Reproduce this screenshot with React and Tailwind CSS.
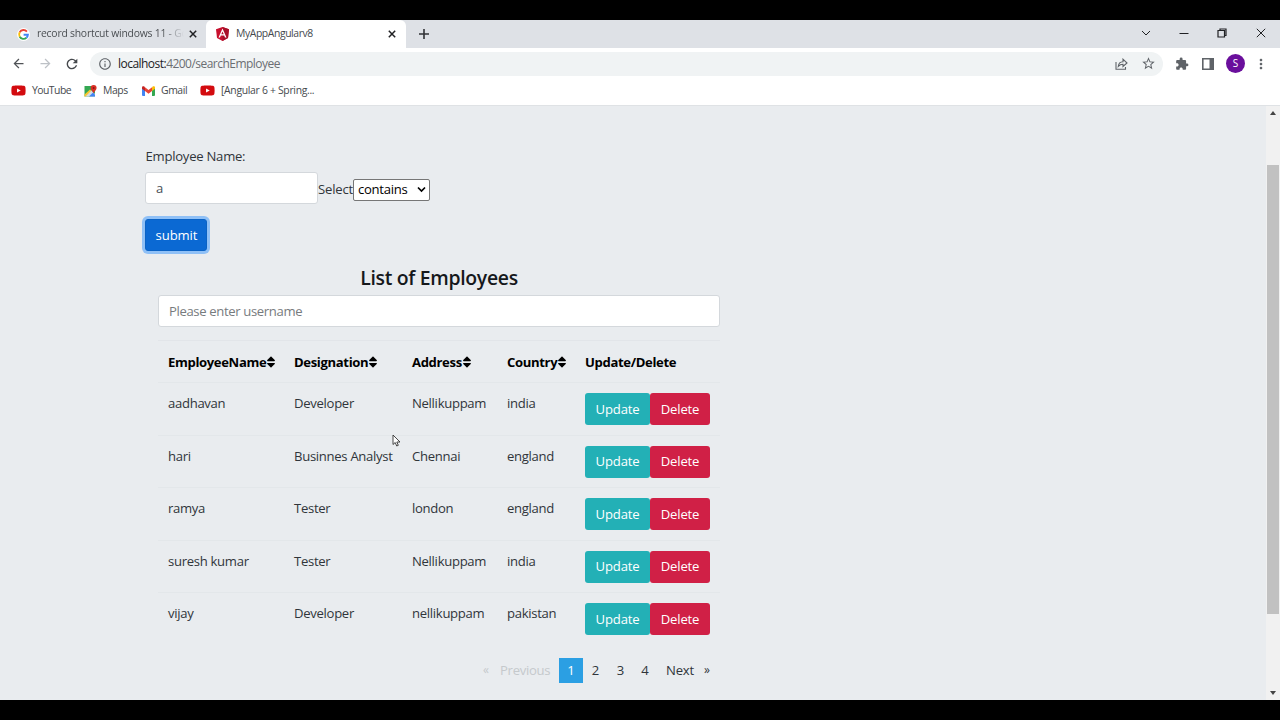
import React, { useState } from "react";
import { FaSort, FaYoutube } from "react-icons/fa";
import { MdExtension, MdStarBorder, MdMoreVert, MdInfoOutline, MdRefresh, MdArrowBack, MdArrowForward } from "react-icons/md";

const employees = [
    { name: "aadhavan", designation: "Developer", address: "Nellikuppam", country: "india" },
    { name: "hari", designation: "Businnes Analyst", address: "Chennai", country: "england" },
    { name: "ramya", designation: "Tester", address: "london", country: "england" },
    { name: "suresh kumar", designation: "Tester", address: "Nellikuppam", country: "india" },
    { name: "vijay", designation: "Developer", address: "nellikuppam", country: "pakistan" },
];

const columns = "grid grid-cols-[126px_118px_95px_78px_1fr] pl-[10px]";

function CloseIcon({ className }) {
    return (
        <svg className={className} width="8" height="8" viewBox="0 0 8 8" stroke="#202124" strokeWidth="1.5">
            <path d="M0.8 0.8l6.4 6.4M7.2 0.8L0.8 7.2" />
        </svg>
    );
}

function GoogleIcon() {
    return (
        <svg className="shrink-0" width="13" height="13" viewBox="0 0 13 13">
            <circle cx="6.5" cy="6.5" r="6.5" fill="#fff" />
            <g fill="none" strokeWidth="1.9">
                <path d="M9.900 3.600A4.400 4.400 0 0 0 2.700 4.300" stroke="#ea4335" />
                <path d="M2.700 4.300A4.400 4.400 0 0 0 2.700 8.700" stroke="#fbbc05" />
                <path d="M2.700 8.700A4.400 4.400 0 0 0 9.400 9.800" stroke="#34a853" />
                <path d="M9.400 9.800A4.400 4.400 0 0 0 10.900 6.700H6.600" stroke="#4285f4" />
            </g>
        </svg>
    );
}

function AngularIcon() {
    return (
        <svg width="13" height="14" viewBox="0 0 13 14">
            <path d="M6.5 0L13 2.3l-1 8.6L6.5 14 1 10.9 0 2.3z" fill="#c8102e" />
            <path d="M6.5 0L13 2.3l-1 8.6L6.5 14z" fill="#a81029" />
            <path d="M6.5 1.6L2.5 10.4H4l.8-2h3.4l.8 2h1.5zM6.5 4.4L7.7 7.2H5.3z" fill="#fff" fillRule="evenodd" />
        </svg>
    );
}

function MapsIcon() {
    return (
        <svg width="13" height="12" viewBox="0 0 13 12">
            <path d="M0.5 1h8L11 5v6.5H0.5z" fill="#34a853" />
            <path d="M0.5 11.5L7 5l4 4v2.5z" fill="#d5dbe3" />
            <path d="M0.5 9.5L6 4.5l1.200 1.200-5.700 5.800h-1z" fill="#fbc52d" />
            <path d="M5 11.5L9 7.5l2 2v2z" fill="#4285f4" />
            <path d="M9.6 0a3 3 0 0 1 3 3c0 2-2 2.8-3 5.2-1-2.400-3-3.200-3-5.200a3 3 0 0 1 3-3z" fill="#d93025" />
            <circle cx="9.600" cy="3" r="1" fill="#8b1a12" />
        </svg>
    );
}

function GmailIcon() {
    return (
        <svg width="13" height="10" viewBox="0 0 13 10">
            <path d="M0 1.500L3 3.500V10H1a1 1 0 0 1-1-1z" fill="#4285f4" />
            <path d="M13 1.500L10 3.500V10h2a1 1 0 0 0 1-1z" fill="#34a853" />
            <path d="M3 1.300L6.500 4 10 1.300V5L6.500 7.700 3 5z" fill="#ea4335" />
            <path d="M0 1.500C0 .2 1.400-.2 2.300.6L3 1.300V5L0 2.800z" fill="#c5221f" />
            <path d="M13 1.500C13 .2 11.600-.2 10.700.6L10 1.300V5l3-2.200z" fill="#fbbc04" />
        </svg>
    );
}

function TabStrip() {
    return (
        <div className="flex h-7 bg-[#dee1e6] text-[10.4px] text-[#45494d]">
            <div className="flex w-[206px] items-center pl-[17px]">
                <GoogleIcon />
                <div className="ml-[7px] w-[147px] bg-linear-to-r from-[#45494d] from-85% to-[#dee1e6] bg-clip-text whitespace-nowrap text-transparent tracking-[-0.230px]">
                    record shortcut windows 11 - Go
                </div>
                <CloseIcon className="ml-[5px] shrink-0" />
            </div>
            <div className="flex w-[200px] items-center rounded-t-md bg-white pl-[10px]">
                <AngularIcon />
                <span className="ml-[7px] tracking-[-0.410px]">MyAppAngularv8</span>
                <CloseIcon className="mr-[10px] ml-auto" />
            </div>
            <div className="flex grow items-center pl-[13px]">
                <svg width="10" height="10" viewBox="0 0 10 10" stroke="#303236" strokeWidth="1.600">
                    <path d="M5 0v10M0 5h10" />
                </svg>
                <div className="ml-auto flex items-center pr-[14px] pb-[2px]">
                    <svg width="10" height="10" viewBox="0 0 10 10" fill="none" stroke="#202124">
                        <path d="M1 3l4 4 4-4" />
                    </svg>
                    <svg className="ml-7" width="10" height="10" viewBox="0 0 10 10" stroke="#202124">
                        <path d="M0.500 5.500h9" />
                    </svg>
                    <svg className="ml-7" width="10" height="10" viewBox="0 0 10 10" fill="none" stroke="#202124" strokeWidth="1.200">
                        <path d="M1 2.500h6.500V9H1zM3 2.500V1h6v6.500H7.500" />
                    </svg>
                    <svg className="ml-[29px]" width="10" height="10" viewBox="0 0 10 10" stroke="#202124">
                        <path d="M0.800 0.800l8.400 8.400M9.200 0.800L0.800 9.200" />
                    </svg>
                </div>
            </div>
        </div>
    );
}

function Toolbar() {
    return (
        <div className="flex h-[31px] items-center bg-white pl-[11px] text-[#5f6368]">
            <MdArrowBack size={15} color="#505357" />
            <MdArrowForward size={15} color="#bdc1c6" className="ml-3" />
            <MdRefresh size={16} color="#46494d" className="ml-[11px]" />
            <div className="ml-[10px] flex h-6 w-[1073px] items-center rounded-full bg-[#f0f3f4] pl-2">
                <MdInfoOutline size={14} />
                <span className="ml-[6px] text-[12px] tracking-[-0.530px] text-[#6b6e72]">
                    <span className="text-[#202124]">localhost:</span>4200/searchEmployee
                </span>
                <svg className="ml-auto" width="13" height="12" viewBox="0 0 13 12" fill="none" stroke="#5f6368" strokeWidth="1.100">
                    <path d="M1 4v7.300h9.500V9M3.300 8.300C3.600 5.300 5 3.800 8 3.700V1.200L12 5 8 8.500V6.200C6 6.200 4.600 6.800 3.300 8.300z" />
                </svg>
                <MdStarBorder size={15} className="mr-[7px] ml-[13px]" />
            </div>
            <MdExtension size={14} className="ml-[12px]" />
            <svg className="ml-[13px]" width="12" height="12" viewBox="0 0 12 12">
                <path d="M0.800 0.800h10.400v10.400H0.800z" fill="none" stroke="#5f6368" strokeWidth="1.600" />
                <path d="M7.500 0.800h4v10.400h-4z" fill="#5f6368" />
            </svg>
            <div className="ml-3 flex size-[19px] items-center justify-center rounded-full bg-[#6a0f9c] text-[10px] text-white">S</div>
            <MdMoreVert size={16} className="ml-[8px]" />
        </div>
    );
}

function Bookmarks() {
    return (
        <div className="flex h-[27px] items-center border-b border-[#dfe2e5] bg-white pb-[3px] pl-[11px] text-[10.400px] text-[#45494d]">
            <FaYoutube size={15} color="#d30b0f" />
            <span className="ml-[6px] w-[52px] tracking-[-0.520px]">YouTube</span>
            <MapsIcon />
            <span className="ml-[6px] w-[39px] tracking-[-0.450px]">Maps</span>
            <GmailIcon />
            <span className="ml-[6px] w-[39px] tracking-[-0.400px]">Gmail</span>
            <FaYoutube size={15} color="#d30b0f" />
            <span className="ml-[6px] tracking-[-0.310px]">[Angular 6 + Spring...</span>
        </div>
    );
}

function SearchForm() {
    const [name, setName] = useState("a");
    return (
        <div>
            <p className="h-[19px] pl-[0.500px] leading-[19px] tracking-[-0.250px]">Employee Name:</p>
            <div className="mt-[6px] flex h-8 items-center">
                <input
                    className="h-8 w-[173px] rounded-[3px] border border-[#d4d8dc] bg-white pl-[10px] text-[#495057] outline-none"
                    value={name}
                    onChange={(e) => setName(e.target.value)}
                />
                <span className="pt-[4px] tracking-[-0.200px]">Select</span>
                <button className="mt-[3px] ml-auto flex h-[22px] w-[78px] items-center justify-between rounded-[2px] border border-[#767676] bg-white pr-[3px] pl-[4px] text-black">
                    <span className="tracking-[-0.280px]">contains</span>
                    <svg width="9" height="7" viewBox="0 0 9 7" fill="none" stroke="#000" strokeWidth="1.700">
                        <path d="M1 1.500l3.500 3.500L8 1.500" />
                    </svg>
                </button>
            </div>
            <button className="mt-[15px] h-8 w-[62px] rounded-[3px] border border-[#0a62c4] bg-[#0b69d3] pt-[2px] pl-px text-white tracking-[-0.100px] shadow-[0_0_0_3px_#8fc0f6]">submit</button>
        </div>
    );
}

function Heading({ children, sort = true }) {
    return (
        <div className="flex items-center text-black">
            <span>{children}</span>
            {sort && <FaSort size={14} className="-mx-[2px] mb-[2px]" />}
        </div>
    );
}

function EmployeeTable() {
    return (
        <div className="mt-[13px] border-t border-[#e2e5e9]">
            <div className={`${columns} h-[41px] pt-[2px] font-bold tracking-[-0.360px]`}>
                <Heading>EmployeeName</Heading>
                <Heading>Designation</Heading>
                <Heading>Address</Heading>
                <Heading>Country</Heading>
                <Heading sort={false}>Update/Delete</Heading>
            </div>
            {employees.map((emp) => (
                <div key={emp.name} className={`${columns} h-[52.500px] border-t border-[#e3e7ea] pt-[10px] leading-[21px] tracking-[-0.300px]`}>
                    <span>{emp.name}</span>
                    <span>{emp.designation}</span>
                    <span>{emp.address}</span>
                    <span>{emp.country}</span>
                    <div className="flex h-8 tracking-[-0.150px] text-white">
                        <button className="w-[65px] rounded-[3px] bg-[#23b0b6]">Update</button>
                        <button className="w-[60px] rounded-[3px] bg-[#d02046]">Delete</button>
                    </div>
                </div>
            ))}
        </div>
    );
}

function Pagination() {
    return (
        <div className="mt-[13px] flex h-[25px] items-center">
            <span className="ml-[325px] w-[17px] text-[12px] text-[#c5c9cc]">«</span>
            <span className="w-[59px] pt-px tracking-[-0.300px] text-[#c5c9cc]">Previous</span>
            <button className="h-[25px] w-6 bg-[#2b9fe3] pt-px text-white">1</button>
            <button className="w-[25px] pt-px">2</button>
            <button className="w-[25px] pt-px">3</button>
            <button className="w-[24px] pt-px">4</button>
            <span className="ml-[9px] w-[38px] pt-px tracking-[-0.200px]">Next</span>
            <span className="text-[12px]">»</span>
        </div>
    );
}

function Scrollbar() {
    return (
        <div className="flex w-[14px] flex-col items-center bg-[#f1f1f1] py-[5px]">
            <svg width="6" height="4" viewBox="0 0 6 4"><path d="M0 4l3-4 3 4z" fill="#444" /></svg>
            <div className="mt-[50px] h-[449px] w-3 bg-[#c1c1c1]" />
            <svg className="mt-auto" width="6" height="4" viewBox="0 0 6 4"><path d="M0 0l3 4 3-4z" fill="#444" /></svg>
        </div>
    );
}

export default function App() {
    return (
        <div className="h-[720px] w-[1280px] overflow-hidden bg-black py-5 font-['Open_Sans',sans-serif]">
            <TabStrip />
            <Toolbar />
            <Bookmarks />
            <div className="relative flex h-[594px] bg-[#e9ecef] text-[13.100px] text-[#30353a]">
                <div className="grow pt-[41px] pl-[145px]">
                    <div className="w-[285px]">
                        <SearchForm />
                    </div>
                    <div className="mt-[12px] ml-[13px] w-[562px]">
                        <h3 className="h-[32px] text-center text-[19.400px] leading-[30px] font-semibold tracking-[-0.300px] text-[#15181b]">List of Employees</h3>
                        <input
                            className="block h-8 w-full rounded-[3px] border border-[#d4d8dc] bg-white pl-[10px] tracking-[-0.360px] outline-none placeholder:text-[#777b7e]"
                            placeholder="Please enter username"
                        />
                        <EmployeeTable />
                        <Pagination />
                    </div>
                </div>
                <Scrollbar />
                <svg className="absolute top-[328px] left-[392px]" width="9" height="13" viewBox="0 0 9 13">
                    <path d="M1 1v9.500l2.200-2 1.500 3.500 1.600-.7L4.800 8H8z" fill="#fff" stroke="#333" strokeWidth="0.900" />
                </svg>
            </div>
        </div>
    );
}
